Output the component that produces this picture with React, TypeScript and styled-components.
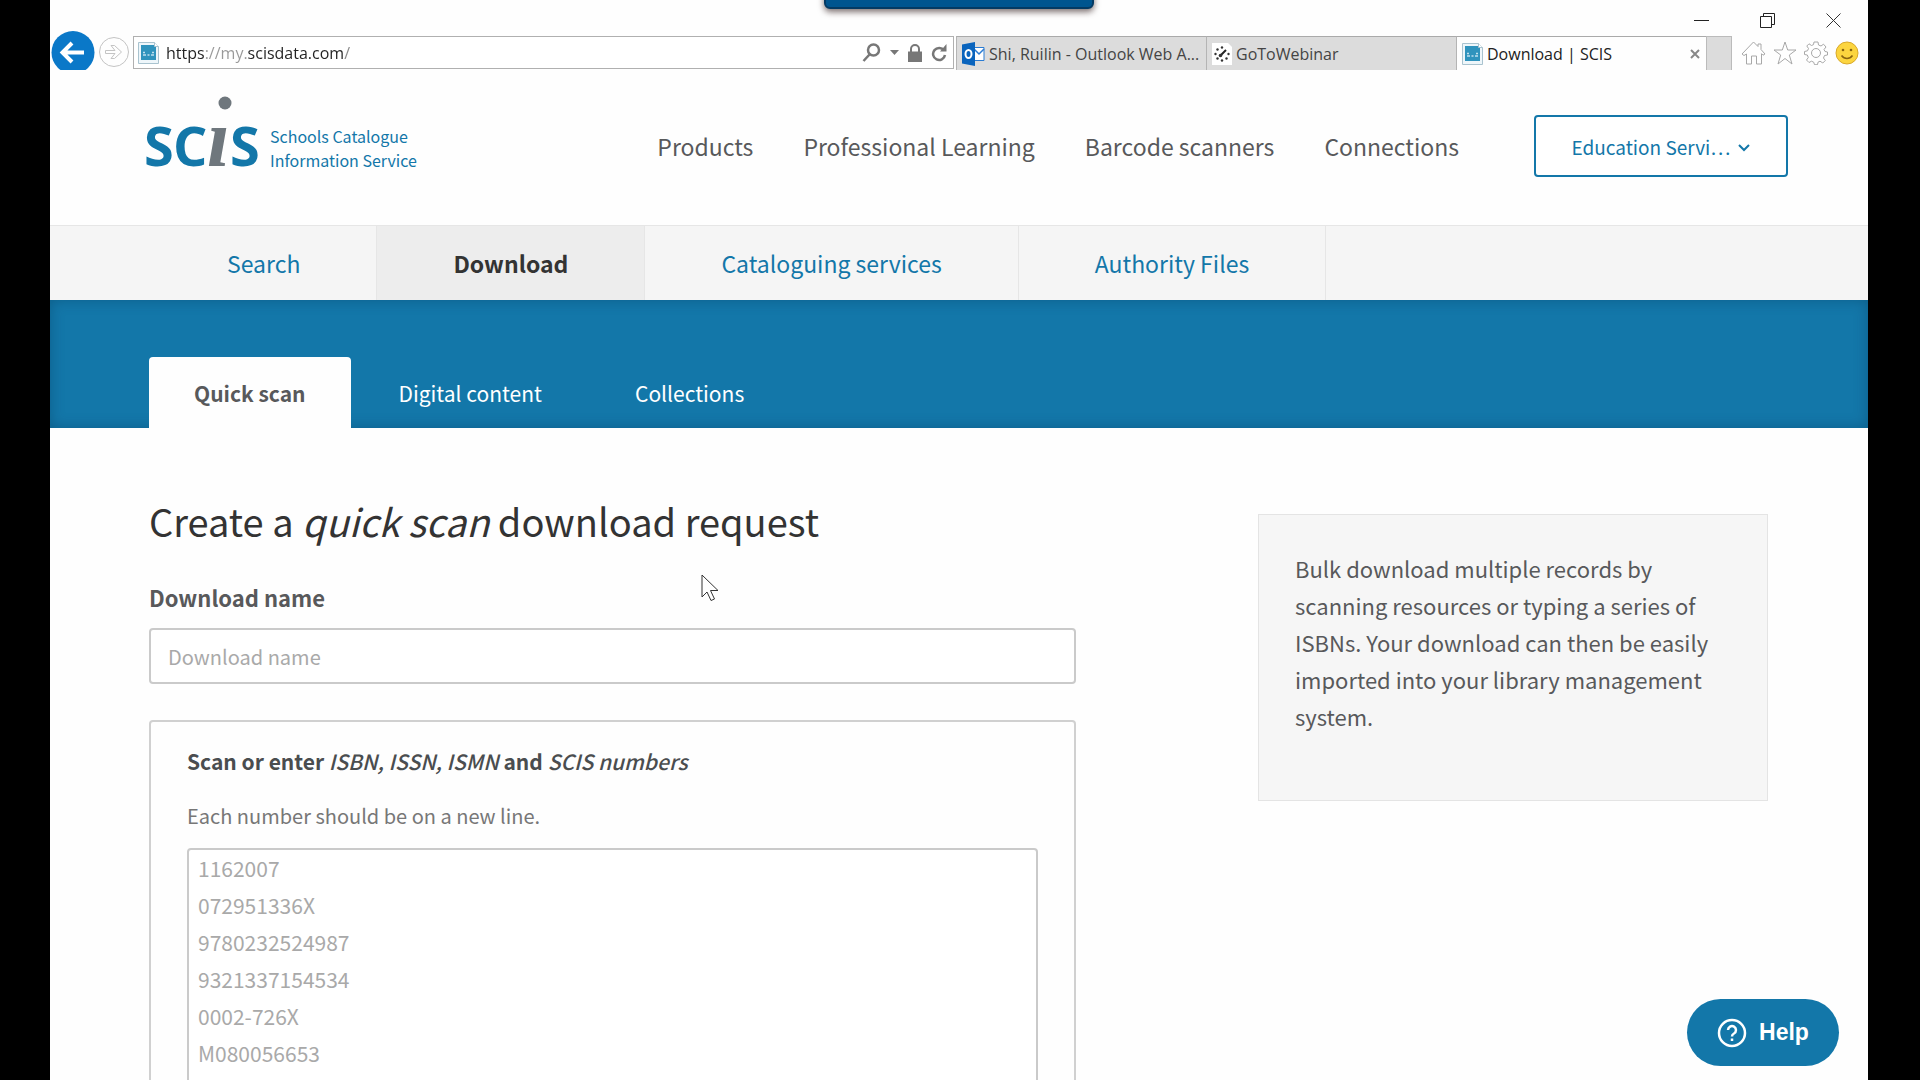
import React from "react";
import styled, { createGlobalStyle, css } from "styled-components";

const BLUE = "#1377a9";
const SITE_FONT = '"Noto Sans CJK SC", "Noto Sans", sans-serif';
const CHROME_FONT = '"Open Sans", "Noto Sans", sans-serif';

const GlobalStyle = createGlobalStyle`
  *, *::before, *::after { box-sizing: border-box; }
  body { margin: 0; background: #000; }
  button, input, textarea { font: inherit; color: inherit; }
  h1, h2, p { margin: 0; font-weight: 400; }
  a { text-decoration: none; color: inherit; }
  svg { flex: none; }
`;

const Stage = styled.div`
  height: 100vh;
  overflow: hidden;
  padding: 0 52px 0 50px;
  background: #000;
  font-family: ${SITE_FONT};
  font-size: 22px;
  color: #58595b;
`;

const Window = styled.div`
  position: relative;
  display: flex;
  flex-direction: column;
  height: 100%;
  overflow: hidden;
  background: #fefefe;
`;

/* ---------- browser frame ---------- */

const SharePill = styled.div`
  position: absolute;
  top: -12px;
  left: 774px;
  width: 270px;
  height: 21px;
  border: 2px solid #043a63;
  border-radius: 6px;
  background: #00558f;
  box-shadow: 0 3px 6px rgba(40, 20, 20, 0.6);
`;

const TitleBar = styled.div`
  display: flex;
  flex: none;
  justify-content: flex-end;
  align-items: flex-end;
  gap: 51px;
  height: 36px;
  padding: 0 27px 8px 0;
`;

const PlainButton = styled.button`
  display: flex;
  align-items: center;
  justify-content: center;
  flex: none;
  padding: 0;
  border: 0;
  background: none;
`;

const ToolBar = styled.div`
  display: flex;
  flex: none;
  align-items: flex-start;
  height: 34px;
  padding: 0 9px 0 1px;
  font-family: ${CHROME_FONT};
  font-size: 16px;
  color: #444;
`;

const BackButton = styled(PlainButton)`
  width: 44px;
  height: 39px;
  margin: -5px 3px 0 0;
  overflow: hidden;
`;

const ForwardButton = styled(PlainButton)`
  width: 32px;
  height: 32px;
  margin-right: 3px;
`;

const AddressBar = styled.div`
  display: flex;
  flex: 1;
  align-items: center;
  gap: 7px;
  height: 33px;
  min-width: 0;
  padding: 0 6px 0 4px;
  margin-right: 2px;
  border: 1px solid #b0b0b0;
  background: #fff;
`;

const UrlInput = styled.input`
  flex: 1;
  min-width: 0;
  height: 29px;
  padding: 0;
  border: 0;
  outline: 0;
  color: #222;
  background: linear-gradient(90deg, #222 0 40px, #999 40px 81px, #222 81px 177px, #888 177px);
  background-clip: text;
  -webkit-background-clip: text;
  -webkit-text-fill-color: transparent;
`;

const AddressTools = styled.div`
  display: flex;
  align-items: center;
  gap: 9px;
`;

const BrowserTab = styled.div<{ $active?: boolean }>`
  display: flex;
  flex: none;
  align-items: center;
  gap: 4px;
  width: 250px;
  height: 34px;
  padding: 0 5px;
  border-top: 1px solid #aaa;
  border-left: 1px solid #b4b4b4;
  background: ${(p) => (p.$active ? "#fefefe" : "#dcdcdc")};
  color: ${(p) => (p.$active ? "#222" : "#444")};
`;

const TabTitle = styled.span`
  flex: 1;
  white-space: nowrap;
`;

const NewTab = styled(PlainButton)`
  width: 26px;
  height: 34px;
  border: 1px solid #bbb;
  border-bottom: 0;
  background: #dcdcdc;
`;

const ChromeIcons = styled.div`
  display: flex;
  align-items: center;
  gap: 7px;
  height: 34px;
  margin-left: 9px;
`;

/* ---------- site header ---------- */

const Header = styled.header`
  display: flex;
  flex: none;
  align-items: center;
  height: 155px;
  padding: 0 80px 3px 95px;
`;

const Logo = styled.a`
  display: flex;
  align-items: flex-start;
  gap: 9px;
  margin: 0 auto 10px 0;
  color: ${BLUE};
`;

const Tagline = styled.span`
  padding-top: 28px;
  font-size: 16px;
  line-height: 24px;
  white-space: nowrap;
`;

const MainNav = styled.nav`
  display: flex;
  gap: 50px;
  font-size: 23px;
  line-height: 36px;
  white-space: nowrap;
`;

const AccountButton = styled.button`
  display: flex;
  align-items: center;
  justify-content: center;
  gap: 8px;
  width: 254px;
  height: 62px;
  margin-left: 75px;
  padding: 0;
  border: 2px solid ${BLUE};
  border-radius: 4px;
  background: #fff;
  color: ${BLUE};
  font-size: 19px;

  svg {
    margin-top: 4px;
  }
`;

const SectionNav = styled.nav`
  display: flex;
  flex: none;
  height: 75px;
  padding-left: 101px;
  border-top: 1px solid #e6e6e6;
  background: #f5f5f5;
  font-size: 23px;
`;

const SectionLink = styled.a<{ $active?: boolean }>`
  display: flex;
  align-items: center;
  padding: 0 76px;
  border-right: 1px solid #e6e6e6;
  color: ${BLUE};
  white-space: nowrap;
  ${(p) =>
    p.$active &&
    css`
      background: #ededed;
      color: #333;
      font-weight: 700;
    `}
`;

const SubBand = styled.nav`
  display: flex;
  flex: none;
  align-items: flex-end;
  gap: 3px;
  height: 128px;
  padding-left: 99px;
  background: ${BLUE};
  box-shadow: inset 0 0 14px rgba(0, 50, 80, 0.35);
`;

const SubLink = styled.a<{ $active?: boolean }>`
  display: flex;
  align-items: center;
  height: 71px;
  padding: 0 45px;
  border-radius: 4px 4px 0 0;
  color: #fff;
  font-size: 21px;
  ${(p) =>
    p.$active &&
    css`
      background: #fefefe;
      color: #58595b;
      font-weight: 700;
    `}
`;

/* ---------- content ---------- */

const Content = styled.main`
  display: grid;
  grid-template-columns: 927fr 510fr;
  column-gap: 182px;
  align-items: start;
  padding: 65px 100px 64px 99px;
`;

const Form = styled.form`
  display: flex;
  flex-direction: column;
`;

const Title = styled.h1`
  margin-bottom: 30px;
  font-size: 38px;
  line-height: 56px;
  color: #333;
`;

const FieldLabel = styled.label`
  margin-bottom: 13px;
  font-weight: 700;
  line-height: 36px;
`;

const fieldBox = css`
  border: 2px solid #cacaca;
  border-radius: 4px;
  background: #fff;
  outline: 0;
  &::placeholder {
    color: #a9a9a9;
    opacity: 1;
  }
`;

const NameInput = styled.input`
  ${fieldBox}
  height: 56px;
  margin-bottom: 36px;
  padding: 0 17px;
  font-size: 20px;
`;

const Panel = styled.section`
  display: flex;
  flex-direction: column;
  padding: 21px 36px 36px;
  border: 2px solid #d0d0d0;
  border-radius: 4px;
`;

const PanelLabel = styled.label`
  margin-bottom: 18px;
  color: #4a4d4f;
  font-size: 21px;
  font-weight: 700;
  line-height: 36px;

  em {
    font-weight: 500;
  }
`;

const Hint = styled.p`
  margin-bottom: 14px;
  color: #777;
  font-size: 20px;
  line-height: 37px;
`;

const NumbersArea = styled.textarea`
  ${fieldBox}
  height: 444px;
  padding: 0 9px;
  font-size: 21px;
  line-height: 37px;
  resize: none;
`;

const InfoBox = styled.aside`
  margin-top: 21px;
  padding: 35px 36px;
  border: 1px solid #e4e4e4;
  background: #f6f6f6;
  line-height: 37px;

  p {
    margin-bottom: 30px;
  }
`;

const HelpButton = styled.button`
  position: absolute;
  right: 29px;
  bottom: 14px;
  display: flex;
  align-items: center;
  justify-content: center;
  gap: 12px;
  width: 152px;
  height: 67px;
  padding: 0;
  border: 0;
  border-radius: 34px;
  background: ${BLUE};
  color: #fff;
  font-family: "Liberation Sans", Arial, sans-serif;
  font-size: 23px;
  font-weight: 700;
`;

const Pointer = styled.svg`
  position: absolute;
  left: 651px;
  top: 574px;
`;

/* ---------- drawings ---------- */

const Favicon = () => (
  <svg width="21" height="22" viewBox="0 0 21 22" aria-hidden="true">
    <path d="M.5.5h16l4 4v17H.5z" fill="#eef6fa" stroke="#a9c3cf" />
    <path d="M3 3h15v15H3z" fill="#2f93bd" />
    <path d="M16.500.5v4h4" fill="#fff" stroke="#a9c3cf" />
    <path d="M5 13h3M9.500 13h2M13 13h3M5 10.500h2M14 10.500h2" stroke="#bfe0ee" strokeWidth="1.500" />
  </svg>
);

const OutlookIcon = () => (
  <svg width="23" height="24" viewBox="0 0 23 24" aria-hidden="true">
    <path d="M11 5.500h11v13H11z" fill="#fff" stroke="#2b7cd3" />
    <path d="M12 7l5 5 5-5" fill="none" stroke="#2b7cd3" strokeWidth="1.500" />
    <path d="M0 2.500L13 0v24L0 21.500z" fill="#0a64bd" />
    <ellipse cx="6.500" cy="12" rx="3" ry="4" fill="none" stroke="#fff" strokeWidth="2" />
  </svg>
);

const WebinarIcon = () => (
  <svg width="20" height="22" viewBox="0 0 20 22" aria-hidden="true">
    <path d="M0 0h16l4 4v18H0z" fill="#fff" />
    <path d="M9 12l5-5" stroke="#222" strokeWidth="2" />
    <g fill="#333">
      <circle cx="10" cy="4.500" r="1.200" />
      <circle cx="5.500" cy="6.500" r="1.200" />
      <circle cx="3.500" cy="11" r="1.200" />
      <circle cx="5.500" cy="15.500" r="1.200" />
      <circle cx="10" cy="17.500" r="1.200" />
      <circle cx="14.500" cy="15.500" r="1.200" />
      <circle cx="16.500" cy="11" r="1.200" />
      <circle cx="8.500" cy="12.500" r="1.800" />
    </g>
  </svg>
);

const LogoMark = () => (
  <svg width="116" height="90" viewBox="0 0 116 90" role="img" aria-label="SCIS">
    <g fontFamily='"Open Sans", "Noto Sans", sans-serif' fontWeight="700" fontSize="54" fill={BLUE}>
      <text x="-1" y="70">S</text>
      <text x="28" y="70">C</text>
      <text x="85" y="70">S</text>
    </g>
    <text x="62" y="70" fontFamily='"Liberation Serif", serif' fontStyle="italic" fontWeight="700" fontSize="82" fill="#6f777d">
      ı
    </text>
    <circle cx="80" cy="7" r="6.500" fill="#6f777d" />
  </svg>
);

export default function App() {
  return (
    <>
      <GlobalStyle />
      <Stage>
        <Window>
          <SharePill />
          <TitleBar>
            <PlainButton aria-label="Minimise">
              <svg width="15" height="15"><path d="M0 7.500h15" stroke="#222" /></svg>
            </PlainButton>
            <PlainButton aria-label="Restore">
              <svg width="15" height="15" fill="none" stroke="#222">
                <path d="M.5 3.500h11v11H.5zM3.500 3.500v-3h11v11h-3" />
              </svg>
            </PlainButton>
            <PlainButton aria-label="Close">
              <svg width="15" height="15"><path d="M.5.5l14 14M14.500.5l-14 14" stroke="#333" /></svg>
            </PlainButton>
          </TitleBar>

          <ToolBar>
            <BackButton aria-label="Back">
              <svg width="44" height="39" viewBox="0 0 44 39">
                <circle cx="22" cy="21.500" r="21.500" fill="#0a78c8" />
                <path d="M33 21.500H12M21 12l-9.500 9.500L21 31" fill="none" stroke="#fff" strokeWidth="4" />
              </svg>
            </BackButton>
            <ForwardButton aria-label="Forward">
              <svg width="32" height="32" viewBox="0 0 32 32" fill="none" stroke="#c4c4c4">
                <circle cx="16" cy="16" r="14.500" />
                <path d="M7.500 14.500h9.500l-4-5h3.500l7 6.500-7 6.500H13l4-5H7.500z" />
              </svg>
            </ForwardButton>
            <AddressBar>
              <Favicon />
              <UrlInput aria-label="Address" defaultValue="https://my.scisdata.com/" />
              <AddressTools>
                <svg width="19" height="20" viewBox="0 0 19 20" fill="none" stroke="#777" strokeWidth="2.500">
                  <circle cx="11.500" cy="7" r="5.500" />
                  <path d="M7.500 11.500L1.500 18" />
                </svg>
                <svg width="9" height="5"><path d="M0 0h9L4.500 5z" fill="#777" /></svg>
                <svg width="14" height="18" viewBox="0 0 14 18">
                  <path d="M0 7.500h14V18H0z" fill="#777" />
                  <path d="M3 8V5a4 4 0 0 1 8 0v3" fill="none" stroke="#777" strokeWidth="2" />
                </svg>
                <svg width="16" height="18" viewBox="0 0 16 18">
                  <path d="M13 6.500A6 6 0 1 0 14 11" fill="none" stroke="#777" strokeWidth="2.500" />
                  <path d="M9 7.500h6.500V0z" fill="#777" />
                </svg>
              </AddressTools>
            </AddressBar>
            <BrowserTab>
              <OutlookIcon />
              <TabTitle>Shi, Ruilin - Outlook Web A...</TabTitle>
            </BrowserTab>
            <BrowserTab>
              <WebinarIcon />
              <TabTitle>GoToWebinar</TabTitle>
            </BrowserTab>
            <BrowserTab $active>
              <Favicon />
              <TabTitle>Download | SCIS</TabTitle>
              <PlainButton aria-label="Close tab">
                <svg width="12" height="10"><path d="M2 1l8 8M10 1L2 9" stroke="#888" strokeWidth="2" /></svg>
              </PlainButton>
            </BrowserTab>
            <NewTab aria-label="New tab" />
            <ChromeIcons>
              <PlainButton aria-label="Home">
                <svg width="25" height="24" viewBox="0 0 25 24" fill="#fff" stroke="#a8a8a8">
                  <path d="M1 13L12.500 1 17 5.500V3h3v5.500l4 4.500-2 1.200-1.500-1.500V23h-5v-8h-5v8h-5v-10L3 14.500z" />
                </svg>
              </PlainButton>
              <PlainButton aria-label="Favourites">
                <svg width="24" height="24" viewBox="0 0 24 24" fill="#fff" stroke="#a8a8a8">
                  <path d="M12 1l2.700 8H23l-6.700 5 2.700 9-7-5.500L5 23l2.700-9L1 9h8.300z" />
                </svg>
              </PlainButton>
              <PlainButton aria-label="Tools">
                <svg width="24" height="24" viewBox="0 0 24 24" fill="#fff" stroke="#a8a8a8">
                  <path d="M10 1h4l.5 3 2.500 1 2.500-1.800 2.500 2.800L20 8.500l1 2 2.500.5v3l-3 .5-1 2.500 1.800 2.500-2.500 2.500-2.800-1.800-2 1-.5 2.500h-3l-.8-2.500-2.200-1L5 21.500 2.500 19l1.800-2.500-1-2.500-2.800-.5v-3l3-.7 1-2.300L2.800 5 5 2.800 7.500 4.500l2-.9z" />
                  <circle cx="12" cy="12" r="4.500" />
                </svg>
              </PlainButton>
              <PlainButton aria-label="Feedback">
                <svg width="24" height="24" viewBox="0 0 24 24">
                  <circle cx="12" cy="12" r="11" fill="#fcd53f" stroke="#d9a92a" />
                  <circle cx="8" cy="9" r="1.300" fill="#8a6510" />
                  <circle cx="16" cy="9" r="1.300" fill="#8a6510" />
                  <path d="M6.500 14.500c3 4 8 4 11 0" fill="none" stroke="#8a6510" strokeWidth="1.500" />
                </svg>
              </PlainButton>
            </ChromeIcons>
          </ToolBar>

          <Header>
            <Logo href="#">
              <LogoMark />
              <Tagline>
                Schools Catalogue
                <br />
                Information Service
              </Tagline>
            </Logo>
            <MainNav>
              <a href="#">Products</a>
              <a href="#">Professional Learning</a>
              <a href="#">Barcode scanners</a>
              <a href="#">Connections</a>
            </MainNav>
            <AccountButton>
              Education Servi…
              <svg width="12" height="8"><path d="M1 1l5 5 5-5" fill="none" stroke={BLUE} strokeWidth="2" /></svg>
            </AccountButton>
          </Header>

          <SectionNav>
            <SectionLink href="#">Search</SectionLink>
            <SectionLink href="#" $active>Download</SectionLink>
            <SectionLink href="#">Cataloguing services</SectionLink>
            <SectionLink href="#">Authority Files</SectionLink>
          </SectionNav>

          <SubBand>
            <SubLink href="#" $active>Quick scan</SubLink>
            <SubLink href="#">Digital content</SubLink>
            <SubLink href="#">Collections</SubLink>
          </SubBand>

          <Content>
            <Form>
              <Title>
                Create a <em>quick scan</em> download request
              </Title>
              <FieldLabel htmlFor="download-name">Download name</FieldLabel>
              <NameInput id="download-name" placeholder="Download name" />
              <Panel>
                <PanelLabel htmlFor="numbers">
                  Scan or enter <em>ISBN, ISSN, ISMN</em> and <em>SCIS numbers</em>
                </PanelLabel>
                <Hint>Each number should be on a new line.</Hint>
                <NumbersArea
                  id="numbers"
                  placeholder={"1162007\n072951336X\n9780232524987\n9321337154534\n0002-726X\nM080056653"}
                />
              </Panel>
            </Form>
            <InfoBox>
              <p>
                Bulk download multiple records by scanning resources or typing a series of ISBNs. Your
                download can then be easily imported into your library management system.
              </p>
            </InfoBox>
          </Content>

          <HelpButton>
            <svg width="30" height="30" viewBox="0 0 30 30" fill="none" stroke="#fff" strokeWidth="2.500">
              <circle cx="15" cy="15" r="13" />
              <path d="M11 12a4 4 0 1 1 6 3.500c-1.500.8-2 1.500-2 3" />
              <path d="M15 20.500v2.500" />
            </svg>
            Help
          </HelpButton>
          <Pointer width="18" height="28" viewBox="0 0 18 28" aria-hidden="true">
            <path d="M1 1v22l5-5 4 8.500 3.500-1.500-4-8.500H17z" fill="#fff" stroke="#333" />
          </Pointer>
        </Window>
      </Stage>
    </>
  );
}
